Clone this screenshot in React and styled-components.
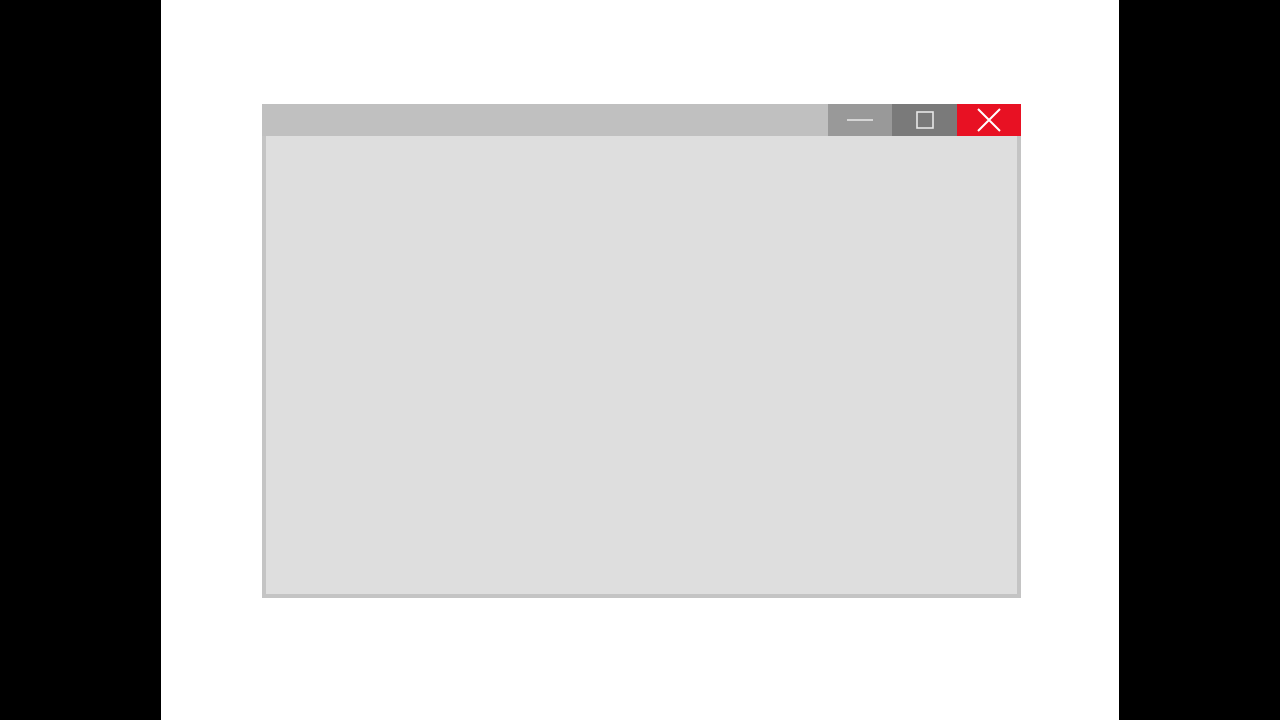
import React from "react";
import styled, { createGlobalStyle } from "styled-components";

const GlobalStyle = createGlobalStyle`
  html, body {
    margin: 0;
    padding: 0;
    background: #000;
    font-family: "Liberation Sans", Arial, sans-serif;
  }
`;

const Screen = styled.div`
  display: flex;
  justify-content: center;
  width: 1280px;
  height: 720px;
  background: #000;
`;

const Stage = styled.div`
  width: 958px;
  height: 720px;
  background: #fff;
  display: flex;
  flex-direction: column;
  padding: 104px 0 0 101px;
  box-sizing: border-box;
`;

const Window = styled.div`
  width: 759px;
  height: 494px;
  display: flex;
  flex-direction: column;
`;

const TitleBar = styled.div`
  height: 32px;
  background: #c0c0c0;
  display: flex;
  justify-content: flex-end;
`;

const CtrlButton = styled.div`
  width: ${(p) => p.$w || 64}px;
  height: 32px;
  background: ${(p) => p.$bg};
  display: flex;
  align-items: center;
  justify-content: center;
`;

const Body = styled.div`
  flex: 1;
  background: #dedede;
  border: 4px solid #c4c4c4;
  border-top: none;
`;

const App = () => {
  return (
    <>
      <GlobalStyle />
      <Screen>
        <Stage>
          <Window>
            <TitleBar>
              <CtrlButton $bg="#999999">
                <svg width="28" height="4" viewBox="0 0 28 4">
                  <line x1="1" y1="2" x2="27" y2="2" stroke="#e4e4e4" strokeWidth="1.6" />
                </svg>
              </CtrlButton>
              <CtrlButton $bg="#7a7a7a" $w={65}>
                <svg width="18" height="18" viewBox="0 0 18 18">
                  <rect x="1" y="1" width="16" height="16" fill="none" stroke="#e8e8e8" strokeWidth="1.6" />
                </svg>
              </CtrlButton>
              <CtrlButton $bg="#e81123">
                <svg width="24" height="24" viewBox="0 0 24 24">
                  <path d="M1 1 L23 23 M23 1 L1 23" stroke="#ffffff" strokeWidth="2" fill="none" />
                </svg>
              </CtrlButton>
            </TitleBar>
            <Body />
          </Window>
        </Stage>
      </Screen>
    </>
  );
};

export default App;
